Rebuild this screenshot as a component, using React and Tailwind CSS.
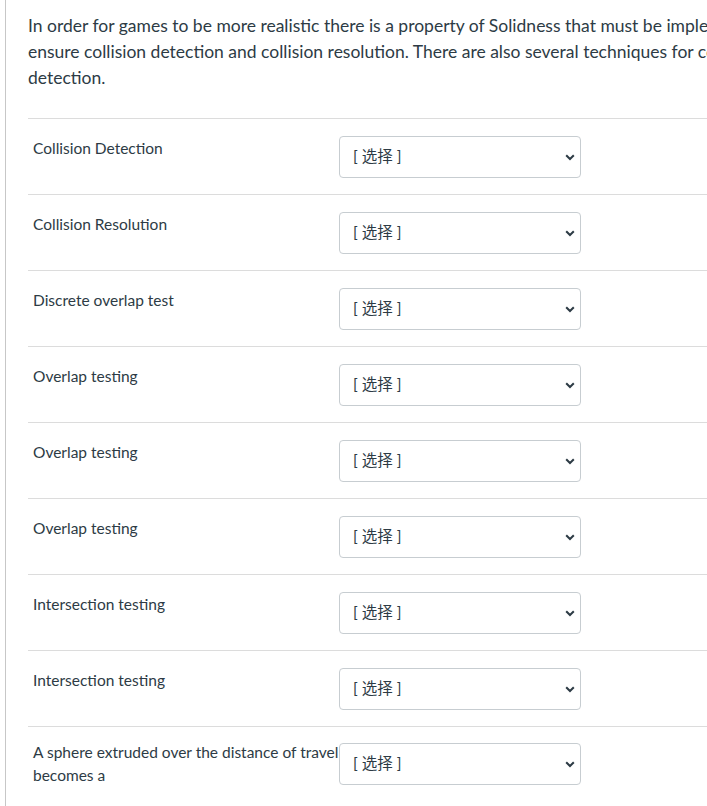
import React from "react";

const rows = [
  "Collision Detection",
  "Collision Resolution",
  "Discrete overlap test",
  "Overlap testing",
  "Overlap testing",
  "Overlap testing",
  "Intersection testing",
  "Intersection testing",
  "A sphere extruded over the distance of travel becomes a",
];

function Chevron() {
  return (
    <svg width="10" height="7" viewBox="0 0 10 7" className="text-[#2d3b45]">
      <path d="M1.2 1.2 L5 5 L8.8 1.2" fill="none" stroke="currentColor" strokeWidth="2" />
    </svg>
  );
}

function AnswerSelect() {
  return (
    <div className="flex h-[42px] w-[242px] shrink-0 items-center justify-between rounded-[4px] border border-[#c7cdd1] bg-white pl-[13px] pr-[5px] text-[15.5px] text-[#2d3b45]">
      <span className="font-['Lato','Noto_Sans_CJK_SC',sans-serif]">[ 选择 ]</span>
      <Chevron />
    </div>
  );
}

export default function App() {
  return (
    <div className="h-[806px] w-[707px] overflow-hidden bg-white font-['Lato','Noto_Sans_CJK_SC',sans-serif] text-[#2d3b45]">
      <div className="ml-[5px] h-full w-[800px] border-l border-[#c7c7c7] pl-[22px] pt-[13px]">
        <p className="text-[17.5px] leading-[26px]">
          In order for games to be more realistic there is a property of Solidness that must be implemented to
          ensure collision detection and collision resolution. There are also several techniques for collision
          detection.
        </p>
        <div className="mt-[27px]">
          {rows.map((label, i) => {
            const last = i === rows.length - 1;
            return (
              <div key={i} className="flex h-[76px] border-t border-[#dcdcdc]">
                <div
                  className={
                    "w-[311px] shrink-0 pl-[5px] text-[15.5px] leading-[23px] " + (last ? "pt-[14px]" : "pt-[18px]")
                  }
                >
                  {label}
                </div>
                <div className={last ? "pt-[16px]" : "pt-[17px]"}>
                  <AnswerSelect />
                </div>
              </div>
            );
          })}
        </div>
      </div>
    </div>
  );
}
